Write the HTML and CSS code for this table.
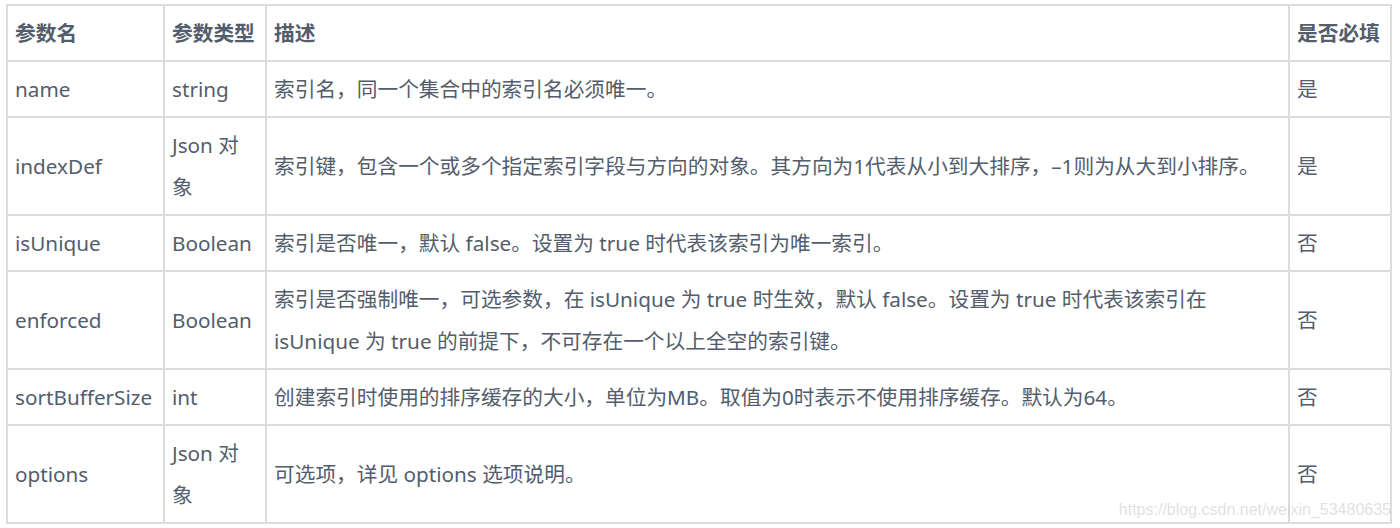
FILE: index.html
```html
<!DOCTYPE html>
<html lang="zh-CN">
<head>
<meta charset="utf-8">
<title>参数说明</title>
<link rel="stylesheet" href="styles.css">
</head>
<body>
<div class="wrap">
  <table class="params">
    <colgroup>
      <col class="c1"><col class="c2"><col class="c3"><col class="c4">
    </colgroup>
    <thead>
      <tr><th>参数名</th><th>参数类型</th><th>描述</th><th>是否必填</th></tr>
    </thead>
    <tbody>
      <tr><td>name</td><td>string</td><td>索引名，同一个集合中的索引名必须唯一。</td><td>是</td></tr>
      <tr><td>indexDef</td><td>Json 对象</td><td>索引键，包含一个或多个指定索引字段与方向的对象。其方向为1代表从小到大排序，–1则为从大到小排序。</td><td>是</td></tr>
      <tr><td>isUnique</td><td>Boolean</td><td>索引是否唯一，默认 false。设置为 true 时代表该索引为唯一索引。</td><td>否</td></tr>
      <tr><td>enforced</td><td>Boolean</td><td>索引是否强制唯一，可选参数，在 isUnique 为 true 时生效，默认 false。设置为 true 时代表该索引在 isUnique 为 true 的前提下，不可存在一个以上全空的索引键。</td><td>否</td></tr>
      <tr><td>sortBufferSize</td><td>int</td><td>创建索引时使用的排序缓存的大小，单位为MB。取值为0时表示不使用排序缓存。默认为64。</td><td>否</td></tr>
      <tr><td>options</td><td>Json 对象</td><td>可选项，详见 options 选项说明。</td><td>否</td></tr>
    </tbody>
  </table>
  <div class="watermark">https://blog.csdn.net/weixin_53480635</div>
</div>
</body>
</html>
```
FILE: styles.css
```css
html, body {
  margin: 0;
  padding: 0;
  background: #ffffff;
}
.wrap {
  position: relative;
  width: 1400px;
  height: 528px;
  padding: 4px 0 0 6px;
  box-sizing: border-box;
}
.params {
  border-collapse: collapse;
  table-layout: fixed;
  width: 1386px;
  font-family: "Noto Sans", "Noto Sans CJK SC", sans-serif;
  font-size: 20.7px;
  line-height: 42px;
  color: #535d6b;
}
.c1 { width: 157px; }
.c2 { width: 102px; }
.c3 { width: 1023px; }
.c4 { width: 102px; }
.params th,
.params td {
  border: 2px solid #dcdcdc;
  padding: 6px 6px 6px 7px;
  text-align: left;
  vertical-align: middle;
  word-break: break-all;
}
.params th {
  font-weight: bold;
}
.params td:nth-child(3) {
  word-break: normal;
  line-break: strict;
}
.watermark {
  position: absolute;
  right: 9px;
  bottom: 9px;
  font-family: "Liberation Sans", Arial, sans-serif;
  font-size: 16px;
  line-height: 18px;
  color: rgba(200, 200, 200, 0.55);
  white-space: nowrap;
}
```
